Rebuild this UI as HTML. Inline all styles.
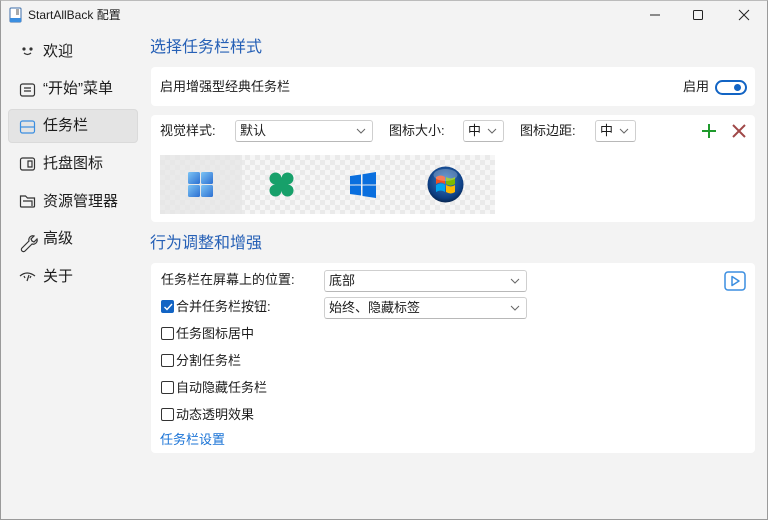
<!DOCTYPE html>
<html><head><meta charset="utf-8"><style>
*{margin:0;padding:0;box-sizing:border-box}
body{width:768px;height:520px;overflow:hidden;background:#f3f3f3;font-family:"Liberation Sans","Noto Sans CJK SC",sans-serif;color:#1b1b1b;position:relative}
.win{position:absolute;left:0;top:0;width:768px;height:520px;border:1px solid #9a9a9a;border-top-color:#bbb}
.a{position:absolute;white-space:nowrap}
.nav{font-size:15px;line-height:20px}
.card{position:absolute;left:151px;width:604px;background:#fff;border-radius:4px}
.t13{font-size:13px;line-height:18px}
.sel{position:absolute;height:22px;border:1px solid #cfcfcf;border-bottom-color:#b8b8b8;border-radius:3px;background:#fff;font-size:13px;line-height:20px;padding-left:4px}
.sel svg{position:absolute;right:6px;top:7px}
.cb{position:absolute;width:13px;height:13px;border:1px solid #333;border-radius:2px;background:#fff}
h2{position:absolute;font-weight:normal;font-size:16px;color:#2660b6;left:150px;line-height:22px}
</style></head><body>
<div class="win"></div>
<svg class="a" style="left:9px;top:7px" width="14" height="16" viewBox="0 0 14 16"><rect x="1" y="1" width="11" height="14" rx="1" fill="#fff" stroke="#3d6ea8"/><rect x="1" y="11" width="11" height="4" fill="#3b8ee0"/><line x1="7" y1="3" x2="10" y2="3" stroke="#555"/><line x1="7" y1="5" x2="10" y2="5" stroke="#555"/><line x1="7" y1="7" x2="10" y2="7" stroke="#555"/></svg>
<div class="a" style="left:28px;top:7px;font-size:12px;line-height:16px">StartAllBack 配置</div>
<svg class="a" style="left:648px;top:9px" width="110" height="12"><line x1="2" y1="6" x2="12" y2="6" stroke="#222"/><rect x="45.5" y="1.5" width="9" height="9" rx="1" fill="none" stroke="#222"/><path d="M91 1 L101 11 M101 1 L91 11" stroke="#222"/></svg>
<div class="a" style="left:8px;top:109px;width:130px;height:34px;background:#e4e4e4;border-radius:4px;border:1px solid #dadada"></div>
<svg class="a" style="left:18px;top:40px" width="20" height="250" fill="none" stroke="#333" stroke-width="1.2">
<circle cx="6" cy="9" r="1" fill="#333"/><circle cx="13" cy="9" r="1" fill="#333"/><path d="M6 13 Q9.5 16 13 13"/>
<rect x="2.5" y="44" width="14" height="12" rx="2"/><path d="M6 48h7M6 51h7"/>
<rect x="2.5" y="81" width="14" height="12" rx="2" stroke="#3b8ee0"/><path d="M3 87h13" stroke="#3b8ee0"/>
<rect x="2.5" y="118" width="14" height="12" rx="2"/><path d="M10 121v6h4v-6z"/>
<path d="M2.5 156v10a1 1 0 0 0 1 1h12a1 1 0 0 0 1-1v-8h-7l-2-2z"/><path d="M5 161h9v5"/>
<path d="M4 208l7-7a4 4 0 0 1 5-5l-3 3 1 2 2 1 3-3a4 4 0 0 1-5 5l-7 7a1.5 1.5 0 0 1-3-3z"/>
<path d="M2 236q7-6 15 0M9 241l2-6M6 236l1 2M13 236l-1 2"/>
</svg>
<div class="a nav" style="left:43px;top:42px">欢迎</div>
<div class="a nav" style="left:43px;top:79px">“开始”菜单</div>
<div class="a nav" style="left:43px;top:116px">任务栏</div>
<div class="a nav" style="left:43px;top:154px">托盘图标</div>
<div class="a nav" style="left:43px;top:192px">资源管理器</div>
<div class="a nav" style="left:43px;top:229px">高级</div>
<div class="a nav" style="left:43px;top:267px">关于</div>
<h2 style="top:37px">选择任务栏样式</h2>
<div class="card" style="top:67px;height:39px"></div>
<div class="a t13" style="left:160px;top:78px">启用增强型经典任务栏</div>
<div class="a t13" style="left:683px;top:78px">启用</div>
<div class="a" style="left:715px;top:80px;width:32px;height:15px;border:2px solid #1264c4;border-radius:8px"></div>
<div class="a" style="left:734px;top:84px;width:7px;height:7px;border-radius:50%;background:#1264c4"></div>
<div class="card" style="top:115px;height:107px"></div>
<div class="a t13" style="left:160px;top:122px">视觉样式:</div>
<div class="sel" style="left:235px;top:120px;width:138px">默认<svg width="10" height="6"><path d="M1 1l4 4 4-4" fill="none" stroke="#666"/></svg></div>
<div class="a t13" style="left:389px;top:122px">图标大小:</div>
<div class="sel" style="left:463px;top:120px;width:41px">中<svg width="10" height="6"><path d="M1 1l4 4 4-4" fill="none" stroke="#666"/></svg></div>
<div class="a t13" style="left:520px;top:122px">图标边距:</div>
<div class="sel" style="left:595px;top:120px;width:41px">中<svg width="10" height="6"><path d="M1 1l4 4 4-4" fill="none" stroke="#666"/></svg></div>
<svg class="a" style="left:700px;top:123px" width="50" height="16"><path d="M9 1v14M2 8h14" stroke="#1f9a2c" stroke-width="2"/><path d="M33 2l12 12M45 2L33 14" stroke="#a04848" stroke-width="2"/></svg>
<div class="a" style="left:160px;top:155px;width:335px;height:59px;background:repeating-conic-gradient(#eaeaea 0 25%,#f6f6f6 0 50%) 0 0/10px 10px"></div>
<div class="a" style="left:160px;top:155px;width:82px;height:59px;background:#e6e6e6;opacity:.7"></div>
<svg class="a" style="left:188px;top:172px" width="26" height="26"><defs><linearGradient id="g" x1="0" y1="0" x2="1" y2="1"><stop offset="0" stop-color="#7cc4f5"/><stop offset="1" stop-color="#2c6fd1"/></linearGradient></defs><rect x="0" y="0" width="12" height="12" rx="1.5" fill="url(#g)"/><rect x="13" y="0" width="12" height="12" rx="1.5" fill="url(#g)"/><rect x="0" y="13" width="12" height="12" rx="1.5" fill="url(#g)"/><rect x="13" y="13" width="12" height="12" rx="1.5" fill="url(#g)"/></svg>
<svg class="a" style="left:269px;top:172px" width="25" height="25" fill="#17a06a"><circle cx="6.5" cy="6.5" r="6"/><circle cx="18.5" cy="6.5" r="6"/><circle cx="6.5" cy="18.5" r="6"/><circle cx="18.5" cy="18.5" r="6"/><rect x="6" y="6" width="13" height="13"/></svg>
<svg class="a" style="left:350px;top:172px" width="26" height="26" fill="#0a6fde"><path d="M0 4l11-1.5v10H0zM12.5 2.3L26 0v12.5H12.5zM0 13.5h11v10L0 22zM12.5 13.5H26V26l-13.5-2z"/></svg>
<svg class="a" style="left:427px;top:166px" width="37" height="37"><defs><radialGradient id="r" cx=".5" cy=".4" r=".6"><stop offset="0" stop-color="#3c7fc9"/><stop offset=".8" stop-color="#0d3e82"/><stop offset="1" stop-color="#082650"/></radialGradient></defs><circle cx="18.5" cy="18.5" r="18" fill="url(#r)"/><path d="M9 11q5-3 9 0v7q-4-3-9 0z" fill="#f25022"/><path d="M19 11q5 3 9 0v7q-4 3-9 0z" fill="#7fba00"/><path d="M9 19q5-3 9 0v7q-4-3-9 0z" fill="#00a4ef"/><path d="M19 19q5 3 9 0v7q-4 3-9 0z" fill="#ffb900"/><ellipse cx="18.5" cy="9" rx="12" ry="6" fill="#fff" opacity=".25"/></svg>
<h2 style="top:233px">行为调整和增强</h2>
<div class="card" style="top:263px;height:190px"></div>
<div class="a t13" style="left:161px;top:271px">任务栏在屏幕上的位置:</div>
<div class="sel" style="left:324px;top:270px;width:203px">底部<svg width="10" height="6"><path d="M1 1l4 4 4-4" fill="none" stroke="#666"/></svg></div>
<div class="cb" style="left:161px;top:300px;background:#1264c4;border-color:#1264c4"></div>
<svg class="a" style="left:163px;top:302px" width="10" height="10"><path d="M1.5 5l2.5 2.5 5-5.5" fill="none" stroke="#fff" stroke-width="1.4"/></svg>
<div class="a t13" style="left:176px;top:298px">合并任务栏按钮:</div>
<div class="sel" style="left:324px;top:297px;width:203px">始终、隐藏标签<svg width="10" height="6"><path d="M1 1l4 4 4-4" fill="none" stroke="#666"/></svg></div>
<div class="cb" style="left:161px;top:327px"></div><div class="a t13" style="left:176px;top:325px">任务图标居中</div>
<div class="cb" style="left:161px;top:354px"></div><div class="a t13" style="left:176px;top:352px">分割任务栏</div>
<div class="cb" style="left:161px;top:381px"></div><div class="a t13" style="left:176px;top:379px">自动隐藏任务栏</div>
<div class="cb" style="left:161px;top:408px"></div><div class="a t13" style="left:176px;top:406px">动态透明效果</div>
<div class="a t13" style="left:160px;top:431px;color:#1a73d6">任务栏设置</div>
<svg class="a" style="left:724px;top:271px" width="22" height="20"><rect x="1" y="1" width="20" height="18" rx="3" fill="none" stroke="#3b8ee0" stroke-width="1.5"/><path d="M8 5.5v9l7-4.5z" fill="none" stroke="#3b8ee0" stroke-width="1.5" stroke-linejoin="round"/></svg>
</body></html>
